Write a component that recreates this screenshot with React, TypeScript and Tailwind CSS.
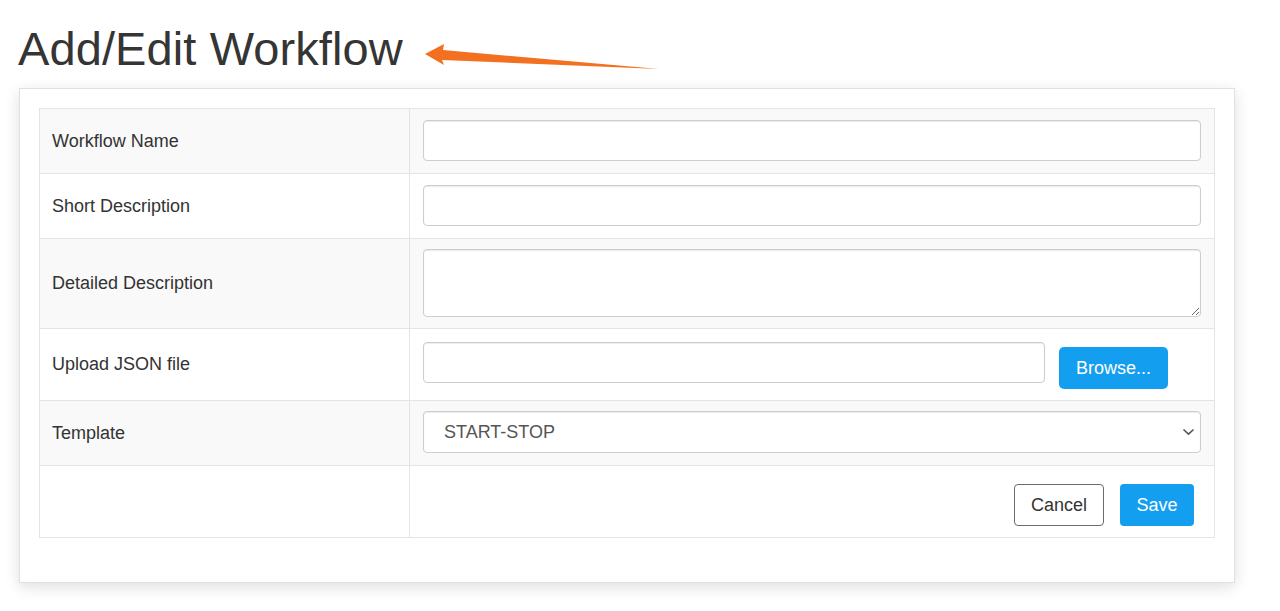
import React from "react";

const font = { fontFamily: '"Liberation Sans", Arial, sans-serif' };

const Row = ({ label, shaded, first, children, cellClass }) => (
  <div
    className={`grid grid-cols-[370px_1fr] ${first ? "" : "border-t border-[#e4e4e4]"} ${
      shaded ? "bg-[#f9f9f9]" : "bg-white"
    }`}
  >
    <div className="flex items-center px-[12px] border-r border-[#e4e4e4] text-[18px] text-[#333]">
      {label}
    </div>
    <div className={cellClass}>{children}</div>
  </div>
);

const fieldCls =
  "block rounded-[4px] border border-[#cdcdcd] bg-white shadow-[inset_0_1px_1px_rgba(0,0,0,0.08)] outline-none";
const inputCls = `${fieldCls} w-full`;

export default function App() {
  return (
    <div className="min-h-[611px] bg-white text-[#333]" style={font}>
      <div className="flex items-start pt-[23px] pl-[18px]">
        <h1 className="text-[47px] leading-[52px] font-normal text-[#353535] tracking-[0.1px]">
          Add/Edit Workflow
        </h1>
        <svg width="240" height="34" viewBox="0 0 240 34" className="ml-[18px] mt-[18px]">
          <polygon points="4,13 23,3 22,9 238,28 21,19 23,24" fill="#f37021" />
        </svg>
      </div>

      <div className="mt-[13px] ml-[19px] w-[1216px] border border-[#e0e0e0] bg-white px-[19px] pt-[19px] pb-[44px] shadow-[0_4px_14px_rgba(0,0,0,0.13)]">
        <div className="border border-[#e4e4e4]">
          <Row label="Workflow Name" shaded first cellClass="px-[13px] pt-[11px] pb-[12px]">
            <input className={`${inputCls} h-[41px]`} />
          </Row>
          <Row label="Short Description" cellClass="px-[13px] pt-[11px] pb-[12px]">
            <input className={`${inputCls} h-[41px]`} />
          </Row>
          <Row label="Detailed Description" shaded cellClass="px-[13px] pt-[10px] pb-[11px]">
            <textarea className={`${inputCls} h-[68px] resize-y`} />
          </Row>
          <Row label="Upload JSON file" cellClass="flex items-start pl-[13px] pt-[13px] pb-[11px]">
            <input className={`${fieldCls} h-[41px] w-[622px] shrink-0`} />
            <button className="ml-[14px] mt-[5px] h-[42px] w-[109px] rounded-[5px] bg-[#149ef0] text-[18px] text-white">
              Browse...
            </button>
          </Row>
          <Row label="Template" shaded cellClass="px-[13px] pt-[10px] pb-[12px]">
            <div className="relative">
              <select
                className={`${inputCls} h-[42px] appearance-none pl-[20px] text-[18px] text-[#555]`}
                style={font}
                defaultValue="START-STOP"
              >
                <option>START-STOP</option>
              </select>
              <svg
                width="13"
                height="8"
                viewBox="0 0 13 8"
                className="pointer-events-none absolute right-[6px] top-[17px]"
              >
                <path d="M1.5 1.5 L6.5 6.2 L11.5 1.5" fill="none" stroke="#555" strokeWidth="1.6" />
              </svg>
            </div>
          </Row>
          <Row label="" cellClass="flex justify-end gap-[16px] pr-[20px] pt-[18px] pb-[11px]">
            <button className="h-[42px] w-[90px] rounded-[4px] border-[1.5px] border-[#6b6b6b] bg-white text-[18px] text-[#333]">
              Cancel
            </button>
            <button className="h-[42px] w-[74px] rounded-[4px] bg-[#149ef0] text-[18px] text-white">
              Save
            </button>
          </Row>
        </div>
      </div>
    </div>
  );
}
